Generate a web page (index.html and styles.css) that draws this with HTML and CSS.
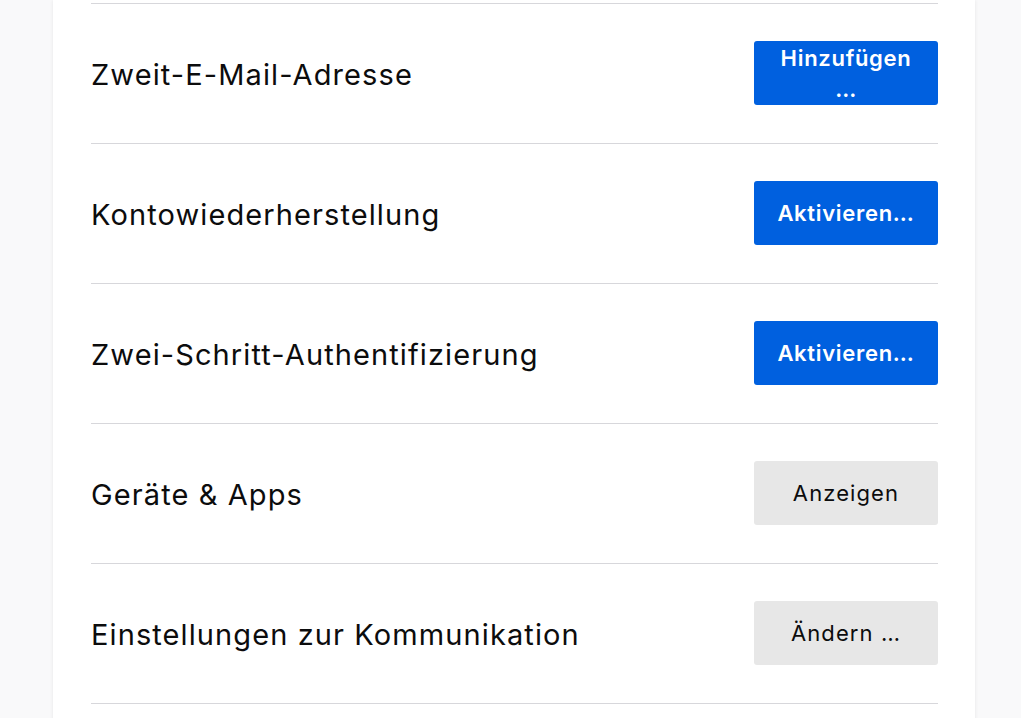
FILE: index.html
```html
<!DOCTYPE html>
<html lang="de">
<head>
<meta charset="utf-8">
<title>Sicherheit</title>
<link rel="stylesheet" href="styles.css">
</head>
<body>
<div class="page">
  <section class="card">
    <div class="row">
      <span class="label">Zweit-E-Mail-Adresse</span>
      <button class="btn primary two-line">Hinzufügen …</button>
    </div>
    <div class="row">
      <span class="label">Kontowiederherstellung</span>
      <button class="btn primary">Aktivieren…</button>
    </div>
    <div class="row">
      <span class="label">Zwei-Schritt-Authentifizierung</span>
      <button class="btn primary">Aktivieren…</button>
    </div>
    <div class="row">
      <span class="label">Geräte &amp; Apps</span>
      <button class="btn secondary">Anzeigen</button>
    </div>
    <div class="row">
      <span class="label">Einstellungen zur Kommunikation</span>
      <button class="btn secondary">Ändern …</button>
    </div>
  </section>
</div>
</body>
</html>
```
FILE: styles.css
```css
html, body {
  margin: 0;
  padding: 0;
  background: #f9f9fa;
  font-family: Inter, "Noto Sans", sans-serif;
  color: #0c0c0d;
}
.page {
  height: 718px;
  overflow: hidden;
}
.card {
  margin-left: 53px;
  width: 922px;
  box-sizing: border-box;
  padding: 3px 37px 20px 38px;
  background: #fff;
  box-shadow: 0 0 4px rgba(12, 12, 13, 0.08);
  min-height: 740px;
}
.row {
  display: flex;
  align-items: center;
  justify-content: space-between;
  height: 139px;
  border-top: 1px solid #d7d7db;
}
.row:last-child {
  border-bottom: 1px solid #d7d7db;
}
.label {
  font-size: 29px;
  font-weight: 400;
  letter-spacing: 1.1px;
  padding-top: 2px;
}
.btn {
  width: 184px;
  height: 64px;
  box-sizing: border-box;
  padding: 0 20px;
  border: none;
  border-radius: 3px;
  font-family: Inter, "Noto Sans", sans-serif;
  font-size: 22px;
  line-height: 31px;
  text-align: center;
  margin-top: -1px;
}
.two-line {
  padding-top: 2px;
}
.primary {
  background: #0060df;
  color: #fff;
  font-weight: 600;
  letter-spacing: 0.7px;
}
.secondary {
  background: #e7e7e7;
  color: #0c0c0d;
  font-weight: 400;
  letter-spacing: 1.1px;
}
```
